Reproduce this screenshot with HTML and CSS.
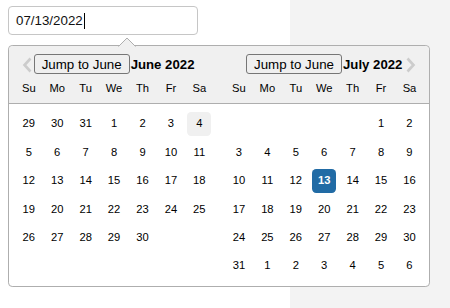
FILE: index.html
```html
<!DOCTYPE html>
<html>
<head>
<meta charset="utf-8">
<link rel="stylesheet" href="styles.css">
</head>
<body>
<div class="page">
  <div class="main">
    <div class="input"><span>07/13/2022</span><span class="caret"></span></div>
    <div class="popup">
      <svg class="triangle" width="18" height="10" viewBox="0 0 18 10"><polygon points="0,10 9,1 18,10" fill="#f0f0f0"/><polyline points="0.5,9.5 9,1 17.5,9.5" fill="none" stroke="#aeaeae" stroke-width="1"/></svg>
      <svg class="nav prev" width="10" height="16" viewBox="0 0 10 16"><polyline points="8.5,1.5 2.5,8 8.5,14.5" fill="none" stroke="#ccc" stroke-width="2.6"/></svg>
      <svg class="nav next" width="10" height="16" viewBox="0 0 10 16"><polyline points="1.5,1.5 7.5,8 1.5,14.5" fill="none" stroke="#ccc" stroke-width="2.6"/></svg>
      <div class="month-container">
        <div class="header">
          <div class="title-row"><button class="jump">Jump to June</button><span class="title">June 2022</span></div>
          <div class="names"><span>Su</span><span>Mo</span><span>Tu</span><span>We</span><span>Th</span><span>Fr</span><span>Sa</span></div>
        </div>
        <div class="month">
          <div class="week"><span>29</span><span>30</span><span>31</span><span>1</span><span>2</span><span>3</span><span class="hover">4</span></div>
          <div class="week"><span>5</span><span>6</span><span>7</span><span>8</span><span>9</span><span>10</span><span>11</span></div>
          <div class="week"><span>12</span><span>13</span><span>14</span><span>15</span><span>16</span><span>17</span><span>18</span></div>
          <div class="week"><span>19</span><span>20</span><span>21</span><span>22</span><span>23</span><span>24</span><span>25</span></div>
          <div class="week"><span>26</span><span>27</span><span>28</span><span>29</span><span>30</span><span class="empty"></span><span class="empty"></span></div>
        </div>
      </div>
      <div class="month-container">
        <div class="header">
          <div class="title-row"><button class="jump">Jump to June</button><span class="title">July 2022</span></div>
          <div class="names"><span>Su</span><span>Mo</span><span>Tu</span><span>We</span><span>Th</span><span>Fr</span><span>Sa</span></div>
        </div>
        <div class="month">
          <div class="week"><span class="empty"></span><span class="empty"></span><span class="empty"></span><span class="empty"></span><span class="empty"></span><span>1</span><span>2</span></div>
          <div class="week"><span>3</span><span>4</span><span>5</span><span>6</span><span>7</span><span>8</span><span>9</span></div>
          <div class="week"><span>10</span><span>11</span><span>12</span><span class="selected">13</span><span>14</span><span>15</span><span>16</span></div>
          <div class="week"><span>17</span><span>18</span><span>19</span><span>20</span><span>21</span><span>22</span><span>23</span></div>
          <div class="week"><span>24</span><span>25</span><span>26</span><span>27</span><span>28</span><span>29</span><span>30</span></div>
          <div class="week"><span>31</span><span>1</span><span>2</span><span>3</span><span>4</span><span>5</span><span>6</span></div>
        </div>
      </div>
    </div>
  </div>
  <div class="side"></div>
</div>
</body>
</html>
```
FILE: styles.css
```css
html { font-size: 14px; }
body {
  margin: 0;
  font-family: "Liberation Sans", Arial, sans-serif;
  color: #000;
}
.page {
  display: flex;
  height: 308px;
  overflow: hidden;
}
.main {
  position: relative;
  width: 290px;
  flex: none;
  background: #fff;
  padding: 6px 8px;
  box-sizing: border-box;
}
.side {
  flex: 1;
  background: #f3f3f3;
}
.input {
  width: 190px;
  height: 29px;
  box-sizing: border-box;
  border: 1px solid #c6c6c6;
  border-radius: 4px;
  padding: 0 7px;
  display: flex;
  align-items: center;
  font-size: 13.33px;
  color: #111;
}
.caret {
  display: inline-block;
  width: 1px;
  height: 16px;
  background: #000;
  margin-left: 1px;
}
.popup {
  position: absolute;
  left: 8px;
  top: 45px;
  display: flex;
  background: #fff;
  border: 1px solid #aeaeae;
  border-radius: 0.3rem;
  font-size: 0.8rem;
  z-index: 2;
}
.triangle {
  position: absolute;
  left: 109px;
  top: -9px;
}
.nav {
  position: absolute;
  top: 11px;
}
.prev { left: 13px; }
.next { left: 397px; }
.month-container {
  display: flex;
  flex-direction: column;
}
.header {
  background: #f0f0f0;
  border-bottom: 1px solid #aeaeae;
  padding-top: 8px;
}
.month-container:first-of-type .header { border-top-left-radius: 0.3rem; }
.month-container:last-of-type .header { border-top-right-radius: 0.3rem; }
.title-row {
  display: flex;
  justify-content: center;
  align-items: center;
  height: 20px;
  gap: 1px;
}
.jump {
  font-family: "Liberation Sans", Arial, sans-serif;
  font-size: 13.33px;
  height: 20px;
  padding: 0 7px;
  background: #efefef;
  border: 1px solid #767676;
  border-radius: 3px;
  color: #000;
}
.title {
  font-weight: bold;
  font-size: 0.944rem;
}
.names {
  display: flex;
  justify-content: center;
  margin-top: 1px;
}
.names span, .week span {
  width: 1.7rem;
  height: 1.7rem;
  line-height: 1.7rem;
  margin: 0.166rem;
  text-align: center;
  border-radius: 0.3rem;
}
.month {
  margin: 0.4rem;
}
.week {
  display: flex;
}
.week .hover { background: #f0f0f0; }
.week .selected {
  background: #216ba5;
  color: #fff;
  font-weight: bold;
}
.week .empty { visibility: hidden; }
```
